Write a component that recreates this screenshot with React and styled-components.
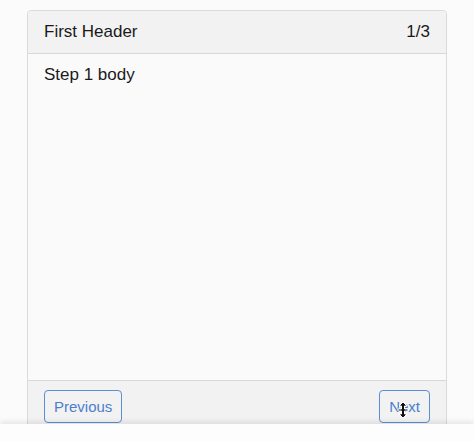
import React from "react";
import styled, { createGlobalStyle } from "styled-components";

const GlobalStyle = createGlobalStyle`
  *, *::before, *::after {
    box-sizing: border-box;
  }
  html, body {
    margin: 0;
    padding: 0;
    background: #fbfbfb;
    font-family: "Liberation Sans", Arial, sans-serif;
    color: #1a1a1a;
  }
`;

function App() {
  return (
    <Page>
      <GlobalStyle />
      <Stage>
        <Card>
          <Header>
            <span>First Header</span>
            <span>1/3</span>
          </Header>
          <Body>Step 1 body</Body>
          <Footer>
            <Button>Previous</Button>
            <ButtonWrap>
              <Button>Next</Button>
              <Cursor viewBox="0 0 14 18">
                <path
                  d="M7 1 L11 5 H8.5 V8 H12 V10 H8.5 V13 H11 L7 17 L3 13 H5.5 V10 H2 V8 H5.5 V5 H3 Z"
                  fill="#111"
                  stroke="#fff"
                  strokeWidth="1"
                />
              </Cursor>
            </ButtonWrap>
          </Footer>
        </Card>
      </Stage>
      <BottomBar />
    </Page>
  );
}

export default App;

const Page = styled.div`
  height: 100vh;
  display: flex;
  flex-direction: column;
`;
const Stage = styled.div`
  height: 424px;
  flex-shrink: 0;
  overflow: hidden;
  padding: 10px 27px 0;
`;
const Card = styled.div`
  height: 422px;
  display: flex;
  flex-direction: column;
  border: 1px solid #dadada;
  border-radius: 4px;
  background: #fafafa;
`;
const Header = styled.div`
  display: flex;
  justify-content: space-between;
  align-items: center;
  height: 43px;
  padding: 0 16px;
  background: #f2f2f2;
  border-bottom: 1px solid #d8d8d8;
  border-radius: 4px 4px 0 0;
  font-size: 17px;
`;
const Body = styled.div`
  flex: 1;
  padding: 9px 16px;
  font-size: 17px;
  line-height: 24px;
`;
const Footer = styled.div`
  display: flex;
  justify-content: space-between;
  align-items: flex-start;
  height: 51px;
  padding: 9px 16px 0;
  background: #f2f2f2;
  border-top: 1px solid #d8d8d8;
`;
const ButtonWrap = styled.div`
  position: relative;
`;
const Button = styled.button`
  height: 33px;
  padding: 0 9px;
  border: 1px solid #5b8ed6;
  border-radius: 4px;
  background: transparent;
  color: #4a7fcf;
  font-family: "Liberation Sans", Arial, sans-serif;
  font-size: 15px;
`;
const Cursor = styled.svg`
  position: absolute;
  left: 17px;
  top: 11px;
  width: 14px;
  height: 18px;
`;
const BottomBar = styled.div`
  flex: 1;
  background: #fdfdfd;
  box-shadow: 0 -3px 5px rgba(0, 0, 0, 0.08);
  position: relative;
`;
